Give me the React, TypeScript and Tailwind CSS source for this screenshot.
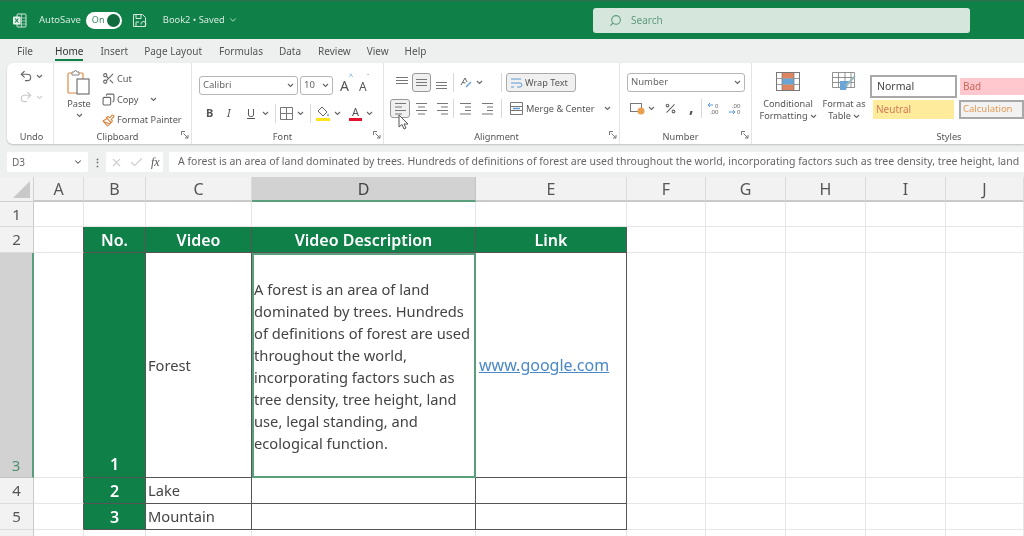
import React from "react";
import { Undo2, Redo2, Scissors, Copy, Paintbrush, Search, ChevronDown, X, Check, Percent } from "lucide-react";

const Chev = ({ className = "" }: { className?: string }) => (
  <svg width="7" height="5" viewBox="0 0 7 5" className={`shrink-0 ${className}`}>
    <path d="M1 1l2.5 2.5L6 1" fill="none" stroke="#666" strokeWidth="1.1" />
  </svg>
);

const Lines = ({ rows, w = 14, s = 3.5 }: { rows: [number, number][]; w?: number; s?: number }) => {
  const h = Math.ceil(3 + (rows.length - 1) * s);
  return (
    <svg width={w} height={h} viewBox={`0 0 ${w} ${h}`} className="shrink-0">
      {rows.map(([x1, x2], i) => (
        <path key={i} d={`M${x1} ${1.5 + i * s}H${x2}`} stroke="#777" strokeWidth="1.1" />
      ))}
    </svg>
  );
};

const Launcher = () => (
  <svg width="8" height="8" viewBox="0 0 8 8" className="shrink-0">
    <path d="M.5 4V.5H4M2.5 2.5L7 7M7 4v3H4" fill="none" stroke="#777" strokeWidth="1" />
  </svg>
);

const Sep = ({ className = "" }: { className?: string }) => <div className={`w-px h-[19px] bg-[#d8d8d8] shrink-0 ${className}`} />;

const Group = ({ w, label, launcher, labelClass = "pr-[10px]", children }: { w: string; label: string; launcher?: boolean; labelClass?: string; children: React.ReactNode }) => (
  <div className={`${w} shrink-0 h-full flex flex-col border-r border-[#e4e4e4] relative`}>
    <div className="h-[67px] shrink-0 flex flex-col">{children}</div>
    <div className={`flex-1 flex items-center justify-center text-[9.2px] text-[#555] pb-[4px] ${labelClass}`}>{label}</div>
    {launcher && (
      <div className="absolute right-[2px] bottom-[5px]">
        <Launcher />
      </div>
    )}
  </div>
);

const Select = ({ w, text }: { w: string; text: string }) => (
  <div className={`${w} h-[19px] rounded-[3px] border border-[#b5b5b5] bg-white flex items-center justify-between pl-[3px] pr-[3px] text-[9.5px] text-[#666]`}>
    <span>{text}</span>
    <Chev />
  </div>
);

const FontBtn = ({ sup, size }: { sup: string; size: string }) => (
  <span className={`${size} text-[#555] leading-none`}>
    A<span className="text-[7px] text-[#5b9bd5] align-top">{sup}</span>
  </span>
);

const tabs = ["File", "Home", "Insert", "Page Layout", "Formulas", "Data", "Review", "View", "Help"];
const tabGaps = ["ml-[17px]", "ml-[22px]", "ml-[17px]", "ml-[16px]", "ml-[17px]", "ml-[16px]", "ml-[17px]", "ml-[16px]", "ml-[16px]"];

const colLetters = ["A", "B", "C", "D", "E", "F", "G", "H", "I", "J"];
const line = "border-r border-b border-[#e6e6e6]";
const dark = "border-r border-b border-[#555]";
const green = "bg-[#0f8048] text-white font-semibold flex items-center justify-center text-[16px]";
const plain = `${line} bg-white`;
const beforeTable = "border-r border-b border-[#e6e6e6] border-r-[#555]";
const bodyText = "flex items-center pl-[2px] text-[14.7px]";

const Cell = ({ className = "", children }: { className?: string; children?: React.ReactNode }) => (
  <div className={`min-w-0 ${className}`}>{children}</div>
);

const RowHead = ({ n, active }: { n: number; active?: boolean }) => (
  <div
    className={`flex justify-center text-[15px] border-b ${
      active
        ? "bg-[#d2d2d2] text-[#4f8f70] border-[#c4c4c4] border-r-2 border-r-[#5a9f7c] items-end pb-[1px]"
        : "bg-[#f1f2f1] text-[#555] border-[#dcdcdc] border-r border-r-[#c9c9c9] items-center"
    }`}
  >
    {n}
  </div>
);

const Blank = ({ n }: { n: number }) => (
  <>
    {Array.from({ length: n }).map((_, i) => (
      <Cell key={i} className={plain} />
    ))}
  </>
);

export default function App() {
  return (
    <div className="w-[1024px] h-[536px] overflow-hidden bg-[#eef0ef] blur-[0.5px]" style={{ fontFamily: '"Noto Sans", sans-serif' }}>
      {/* Title bar */}
      <div className="h-[39px] bg-[#0f8048] border-t border-[#2f6d4d] flex items-center text-[#d7e9df] text-[9.5px]">
        <svg width="15" height="15" viewBox="0 0 15 15" className="ml-[12px] shrink-0">
          <rect x="5" y="1" width="9" height="13" rx="1" fill="none" stroke="#d7e9df" strokeWidth="1" />
          <path d="M5 5h9M5 8h9M5 11h9M9.5 1v13" stroke="#d7e9df" strokeWidth=".7" />
          <rect x="1" y="3.5" width="7.5" height="8" rx="1" fill="#e6f1ea" />
          <path d="M3 5.5l3.4 4M6.4 5.5L3 9.5" stroke="#0f8048" strokeWidth="1.1" />
        </svg>
        <span className="ml-[12px]">AutoSave</span>
        <div className="ml-[5px] w-[36px] h-[17px] rounded-full bg-white flex items-center justify-between pl-[6px] pr-[2px] text-[#3d8b65] text-[9px]">
          <span>On</span>
          <span className="w-[13px] h-[13px] rounded-full bg-[#0f6b3e]" />
        </div>
        <svg width="15" height="15" viewBox="0 0 15 15" className="ml-[10px] shrink-0">
          <path d="M1.5 1.5h9l3 3v9h-12z" fill="none" stroke="#d7e9df" />
          <path d="M4 1.5v4h5v-4M4 13.5V9h3" fill="none" stroke="#d7e9df" />
          <path d="M9 11.5a2.5 2.5 0 1 1 2.5 2" fill="none" stroke="#d7e9df" />
        </svg>
        <span className="ml-[16px] text-[9.3px]">Book2 • Saved</span>
        <ChevronDown size={10} strokeWidth={2} className="ml-[3px]" />
        <div className="ml-auto mr-[54px] w-[377px] h-[25px] rounded-[3px] bg-[#d5e6dd] flex items-center pl-[16px] text-[#5f9a7b] text-[10px]">
          <Search size={13} className="-scale-x-100" />
          <span className="ml-[9px]">Search</span>
        </div>
      </div>

      {/* Tabs */}
      <div className="h-[24px] flex items-start pt-[5px] text-[10px] text-[#555]">
        {tabs.map((t, i) => (
          <span key={t} className={`${tabGaps[i]} ${t === "Home" ? "border-b-2 border-[#0f8048] h-[17px] text-[#333]" : ""}`}>
            {t}
          </span>
        ))}
      </div>

      {/* Ribbon */}
      <div className="ml-[7px] h-[81px] bg-white rounded-l-[6px] shadow-[0_1px_2px_rgba(0,0,0,0.2)] flex overflow-hidden text-[#555]">
        <Group w="w-[47px]" label="Undo" labelClass="pl-[3px]">
          <div className="flex items-center pl-[12px] pt-[6px] gap-[3px]">
            <Undo2 size={14} color="#666" />
            <Chev />
          </div>
          <div className="flex items-center pl-[12px] pt-[7px] gap-[3px]">
            <Redo2 size={14} color="#c8c8c8" />
            <Chev className="opacity-30" />
          </div>
        </Group>

        <Group w="w-[138px]" label="Clipboard" launcher>
          <div className="flex">
            <div className="w-[46px] flex flex-col items-center pt-[6px] pl-[4px]">
              <svg width="24" height="26" viewBox="0 0 24 26" className="shrink-0">
                <rect x="1" y="4" width="15" height="20" rx="1" fill="none" stroke="#e08b45" strokeWidth="1.2" />
                <path d="M5 6V3h2l1.500-2 1.500 2h2v3z" fill="#fff" stroke="#888" />
                <rect x="10" y="10" width="12" height="15" fill="#fff" stroke="#666" strokeWidth="1.1" />
              </svg>
              <span className="text-[9.2px] mt-[2px] leading-[14px]">Paste</span>
              <Chev className="mt-[2px]" />
            </div>
            <div className="flex flex-col pt-[5px] pl-[1px] text-[9.2px]">
              <div className="h-[21px] flex items-center">
                <Scissors size={13} color="#666" className="mx-[1px]" />
                <span className="ml-[1px]">Cut</span>
              </div>
              <div className="h-[21px] flex items-center">
                <Copy size={13} color="#666" className="mx-[1px] -scale-x-100" />
                <span className="ml-[1px]">Copy</span>
                <Chev className="ml-[11px]" />
              </div>
              <div className="h-[20px] flex items-center">
                <Paintbrush size={13} color="#d9803a" className="mx-[1px]" />
                <span className="ml-[1px] whitespace-nowrap">Format Painter</span>
              </div>
            </div>
          </div>
        </Group>

        <Group w="w-[192px]" label="Font" launcher>
          <div className="flex items-center pt-[10px] pl-[7px]">
            <Select w="w-[99px]" text="Calibri" />
            <Select w="w-[33px] ml-[2px]" text="10" />
            <span className="ml-[7px]"><FontBtn sup="^" size="text-[14px]" /></span>
            <span className="ml-[6px]"><FontBtn sup="ˇ" size="text-[12px]" /></span>
          </div>
          <div className="flex items-center mt-[7px] pl-[14px] text-[11px] h-[19px]">
            <b className="w-[21px]">B</b>
            <i className="w-[20px]">I</i>
            <span className="underline">U</span>
            <Chev className="ml-[7px]" />
            <Sep className="ml-[6px]" />
            <svg width="13" height="13" viewBox="0 0 13 13" className="ml-[4px] shrink-0">
              <path d="M.5.5h12v12H.5zM6.500.5v12M.5 6.500h12" fill="none" stroke="#777" />
            </svg>
            <Chev className="ml-[4px]" />
            <Sep className="ml-[6px]" />
            <svg width="14" height="15" viewBox="0 0 14 15" className="ml-[5px] shrink-0">
              <path d="M6 1l5 5-4 4-5-5z" fill="none" stroke="#666" />
              <path d="M12 7l1 3h-2z" fill="#5b9bd5" />
              <rect y="12" width="14" height="3" fill="#ffe51a" />
            </svg>
            <Chev className="ml-[4px]" />
            <div className="ml-[8px] w-[13px] flex flex-col items-center leading-none">
              <span className="text-[11px] leading-[11px]">A</span>
              <span className="w-[13px] h-[3px] bg-[#e8112d] mt-[1px]" />
            </div>
            <Chev className="ml-[4px]" />
          </div>
        </Group>

        <Group w="w-[236px]" label="Alignment" launcher>
          <div className="flex items-center pt-[10px] pl-[8px] h-[29px]">
            <div className="w-[19px] flex justify-center items-start h-[19px] pt-[3px]"><Lines w={14} s={3} rows={[[1, 13], [1, 13], [1, 13]]} /></div>
            <div className="ml-[1px] w-[19px] h-[19px] rounded-[3px] border border-[#999] bg-[#f0f0f0] flex items-center justify-center"><Lines w={13} s={3} rows={[[1, 12], [1, 12], [1, 12]]} /></div>
            <div className="ml-[4px] w-[14px] h-[19px] flex items-end pb-[2px]"><Lines w={13} s={3} rows={[[1, 12], [1, 12], [1, 12]]} /></div>
            <Sep className="ml-[4px]" />
            <svg width="14" height="14" viewBox="0 0 14 14" className="ml-[5px] shrink-0">
              <path d="M2 9l4-7 2 4M3.500 6.500l3 .5" fill="none" stroke="#666" />
              <path d="M7 11l5-5" stroke="#5b9bd5" strokeWidth="1.2" />
            </svg>
            <Chev className="ml-[3px]" />
            <Sep className="ml-[18px]" />
            <div className="ml-[4px] w-[70px] h-[19px] rounded-[3px] border border-[#aaa] bg-[#f0f0f0] flex items-center pl-[3px] text-[9.2px] whitespace-nowrap">
              <svg width="13" height="12" viewBox="0 0 13 12" className="shrink-0">
                <path d="M1 2h10M1 6h9a2 2 0 0 1 0 4H7M1 10h3" fill="none" stroke="#5b9bd5" />
              </svg>
              <span className="ml-[2px]">Wrap Text</span>
            </div>
          </div>
          <div className="flex items-center mt-[7px] pl-[6px] h-[19px] relative">
            <div className="w-[20px] h-[19px] rounded-[3px] border border-[#999] bg-[#f0f0f0] flex items-center justify-center"><Lines w={13} rows={[[1, 12], [1, 8], [1, 12], [1, 8]]} /></div>
            <div className="ml-[5px]"><Lines w={13} rows={[[1, 12], [3, 10], [1, 12], [3, 10]]} /></div>
            <div className="ml-[8px]"><Lines w={13} rows={[[1, 12], [5, 12], [1, 12], [5, 12]]} /></div>
            <Sep className="ml-[4px]" />
            <div className="ml-[5px]"><Lines w={13} rows={[[1, 12], [6, 12], [6, 12], [1, 12]]} /></div>
            <div className="ml-[9px]"><Lines w={13} rows={[[1, 12], [6, 12], [6, 12], [1, 12]]} /></div>
            <Sep className="ml-[7px]" />
            <svg width="13" height="13" viewBox="0 0 13 13" className="ml-[8px] shrink-0">
              <path d="M.5 .5h12v12H.5zM.5 4.500h12M.5 8.500h12" fill="none" stroke="#777" />
              <path d="M3 6.500h7" stroke="#5b9bd5" strokeWidth="1.500" />
            </svg>
            <span className="ml-[3px] text-[9.2px] whitespace-nowrap">Merge &amp; Center</span>
            <Chev className="ml-[9px]" />
            <svg width="12" height="17" viewBox="0 0 12 17" className="absolute left-[14px] top-[15px]">
              <path d="M1 1v12l3-2.500 2 4.500 2-1-2-4h4z" fill="#fff" stroke="#555" />
            </svg>
          </div>
        </Group>

        <Group w="w-[132px]" label="Number" launcher>
          <div className="pt-[10px] pl-[7px]">
            <Select w="w-[118px]" text="Number" />
          </div>
          <div className="flex items-center mt-[7px] pl-[10px] h-[19px]">
            <svg width="15" height="13" viewBox="0 0 15 13" className="shrink-0">
              <rect x=".5" y="1.500" width="11" height="8" fill="none" stroke="#777" />
              <circle cx="11" cy="9" r="3.500" fill="#e8a04f" />
            </svg>
            <Chev className="ml-[3px]" />
            <Percent size={13} color="#666" className="ml-[9px]" />
            <b className="ml-[12px] text-[16px] leading-none text-[#555] -mt-[4px]">,</b>
            <Sep className="ml-[7px]" />
            <svg width="14" height="13" viewBox="0 0 14 13" className="ml-[5px] shrink-0">
              <path d="M6 3H1m2-2L1 3l2 2" fill="none" stroke="#5b9bd5" />
              <text x="8" y="6" fontSize="6" fill="#666">0</text>
              <text x="3" y="12" fontSize="6" fill="#666">.00</text>
            </svg>
            <svg width="14" height="13" viewBox="0 0 14 13" className="ml-[7px] shrink-0">
              <text x="4" y="6" fontSize="6" fill="#666">.00</text>
              <path d="M1 10h6m-2-2l2 2-2 2" fill="none" stroke="#5b9bd5" />
              <text x="9" y="12" fontSize="6" fill="#666">0</text>
            </svg>
          </div>
        </Group>

        <div className="flex-1 h-full flex flex-col min-w-0">
          <div className="h-[67px] shrink-0 flex">
            <div className="w-[70px] shrink-0 flex flex-col items-center pt-[9px] text-[9.2px] leading-[12px] ml-[1px]">
              <svg width="24" height="19" viewBox="0 0 24 19" className="shrink-0">
                <rect x=".5" y=".5" width="23" height="18" fill="#fff" stroke="#777" />
                <rect x="6" y="1" width="12" height="5" fill="#dd8560" />
                <rect x="6" y="7" width="12" height="5" fill="#6ba5d8" />
                <rect x="6" y="13" width="12" height="5" fill="#dd8560" />
                <path d="M6 .5v18M18 .5v18M.5 6.500h23M.5 12.500h23" stroke="#777" strokeWidth=".7" />
              </svg>
              <span className="mt-[7px]">Conditional</span>
              <span className="whitespace-nowrap flex items-center gap-[2px]">Formatting <Chev /></span>
            </div>
            <div className="w-[42px] shrink-0 flex flex-col items-center pt-[9px] text-[9.2px] leading-[12px]">
              <svg width="25" height="20" viewBox="0 0 25 20" className="shrink-0">
                <path d="M.5.5h22v15H.5zM6.500.5v15M13 .5v15M19 .5v15M.5 5.500h22M.5 10.500h22" fill="none" stroke="#777" strokeWidth=".8" />
                <path d="M8 9h9l-3 9H8z" fill="#6ba5d8" />
                <path d="M14 14L23 4" stroke="#9bb" strokeWidth="2" />
              </svg>
              <span className="mt-[6px] whitespace-nowrap">Format as</span>
              <span className="whitespace-nowrap flex items-center gap-[2px]">Table <Chev /></span>
            </div>
            <div className="ml-[5px] mt-[12px] h-[44px] flex-1 grid grid-cols-[87px_1fr] grid-rows-[23px_21px] text-[10px] whitespace-nowrap">
              <div className="border-2 border-[#a8a8a8] flex items-center pl-[5px] text-[#444] text-[10.5px]">Normal</div>
              <div className="ml-[3px] my-[3px] bg-[#ffc7ce] flex items-center pl-[3px] text-[#c96a5a]">Bad</div>
              <div className="mx-[3px] mt-[2px] bg-[#ffeb9c] flex items-center pl-[3px] text-[#d27a5a]">Neutral</div>
              <div className="ml-[2px] mt-[2px] border-2 border-[#a8a8a8] bg-[#f2f2f2] flex items-center pl-[2px] text-[#e69a55] text-[9.5px]">Calculation</div>
            </div>
          </div>
          <div className="flex-1 flex items-center justify-center text-[9.2px] text-[#555] pb-[4px] pl-[122px]">Styles</div>
        </div>
      </div>

      {/* Formula bar */}
      <div className="h-[33px] flex items-center pt-[3px] text-[#666]">
        <div className="ml-[7px] w-[81px] h-[20px] bg-white rounded-[2px] flex items-center justify-between px-[5px] text-[10px]">
          <span>D3</span>
          <ChevronDown size={10} strokeWidth={2.500} color="#555" />
        </div>
        <div className="w-[18px] flex justify-center text-[11px] font-bold leading-none">⋮</div>
        <div className="w-[57px] h-[20px] bg-white rounded-[2px] flex items-center pl-[4px]">
          <X size={13} color="#cfcfcf" />
          <Check size={15} color="#cfcfcf" className="ml-[6px]" />
          <i className="ml-[7px] text-[12px] text-[#555]" style={{ fontFamily: '"Liberation Serif", serif' }}>fx</i>
        </div>
        <div className="ml-[6px] flex-1 h-[20px] bg-white rounded-l-[2px] flex items-center pl-[9px] text-[10.5px] whitespace-nowrap overflow-hidden text-[#666]">
          A forest is an area of land dominated by trees. Hundreds of definitions of forest are used throughout the world, incorporating factors such as tree density, tree height, land
        </div>
      </div>

      {/* Sheet */}
      <div className="grid grid-cols-[34px_50px_62px_106px_224px_151px_79px_80px_80px_80px_78px] grid-rows-[25px_25px_26px_225px_26px_26px_6px] bg-white text-[#444]">
        <div className="bg-[#f1f2f1] border-r border-b border-[#cfcfcf] flex items-end justify-end pb-[3px] pr-[3px]">
          <svg width="17" height="17" viewBox="0 0 17 17"><path d="M17 0v17H0z" fill="#c9c9c9" /></svg>
        </div>
        {colLetters.map((c) => (
          <div
            key={c}
            className={`flex items-center justify-center text-[16px] border-r border-b-2 ${
              c === "D" ? "bg-[#d2d2d2] border-r-[#c4c4c4] border-b-[#5a9f7c]" : "bg-[#f1f2f1] text-[#555] border-r-[#dcdcdc] border-b-[#c9c9c9]"
            }`}
          >
            {c}
          </div>
        ))}

        <RowHead n={1} />
        <Blank n={10} />

        <RowHead n={2} />
        <Cell className={beforeTable} />
        <Cell className={`${green} ${dark}`}>No.</Cell>
        <Cell className={`${green} ${dark}`}>Video</Cell>
        <Cell className={`${green} ${dark}`}>Video Description</Cell>
        <Cell className={`${green} ${dark}`}>Link</Cell>
        <Blank n={5} />

        <RowHead n={3} active />
        <Cell className={beforeTable} />
        <Cell className={`${green} ${dark} !items-end pb-[1px]`}>1</Cell>
        <Cell className={`${dark} ${bodyText}`}>Forest</Cell>
        <Cell className="border-2 border-[#5a9f7c] flex items-center text-[14.7px] leading-[22px]">
          A forest is an area of land dominated by trees. Hundreds of definitions of forest are used throughout the world, incorporating factors such as tree density, tree height, land use, legal standing, and ecological function.
        </Cell>
        <Cell className={`${dark} flex items-center pl-[3px] text-[16px] text-[#4a88c7] underline`}>www.google.com</Cell>
        <Blank n={5} />

        <RowHead n={4} />
        <Cell className={beforeTable} />
        <Cell className={`${green} ${dark}`}>2</Cell>
        <Cell className={`${dark} ${bodyText}`}>Lake</Cell>
        <Cell className={dark} />
        <Cell className={dark} />
        <Blank n={5} />

        <RowHead n={5} />
        <Cell className={beforeTable} />
        <Cell className={`${green} ${dark}`}>3</Cell>
        <Cell className={`${dark} ${bodyText}`}>Mountain</Cell>
        <Cell className={dark} />
        <Cell className={dark} />
        <Blank n={5} />

        <div className="bg-[#f1f2f1] border-r border-[#c9c9c9]" />
        {Array.from({ length: 10 }).map((_, i) => (
          <Cell key={i} className="border-r border-[#e6e6e6]" />
        ))}
      </div>
    </div>
  );
}
